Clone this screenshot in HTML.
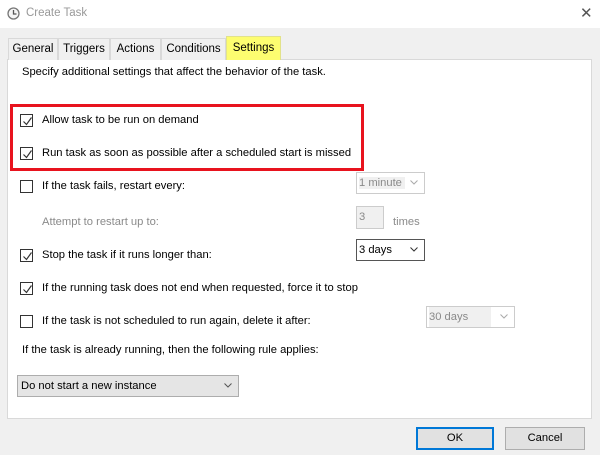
<!DOCTYPE html><html><head><style>
*{margin:0;padding:0;box-sizing:border-box}
body{width:600px;height:455px;background:#f0f0f0;position:relative;overflow:hidden;font-family:"Liberation Sans",sans-serif;font-size:11.2px;color:#000}
.a{position:absolute;white-space:nowrap}
.cb{position:absolute;width:13px;height:13px;border:1px solid #333;background:#fff}
.cb svg{position:absolute;left:1px;top:1px}
.tab{position:absolute;top:38px;height:22px;border:1px solid #d9d9d9;border-bottom:none;background:#f0f0f0;text-align:center;line-height:21px;font-size:11.5px}
.g{color:#8a8a8a}
.dd{position:absolute;border:1px solid #ccc;background:#fff;line-height:20px;padding-left:2px}
.ch{position:absolute;right:6px;top:7px}
</style></head><body>
<div class="a" style="left:0;top:0;width:600px;height:28px;background:#fff"></div>
<svg class="a" style="left:7px;top:7px" width="13" height="13" viewBox="0 0 13 13"><circle cx="6.5" cy="6.5" r="5.5" fill="#f5f5f5" stroke="#777" stroke-width="1.3"/><path d="M6.5 3v4h3" stroke="#555" fill="none" stroke-width="1.3"/></svg>
<div class="a" style="left:26px;top:7px;font-size:11.5px;color:#999">Create Task</div>
<div class="a" style="left:580px;top:4px;font-size:15px;color:#555">✕</div>
<div class="a" style="left:7px;top:59px;width:585px;height:360px;background:#fff;border:1px solid #d9d9d9"></div>
<div class="tab" style="left:8px;width:50px">General</div>
<div class="tab" style="left:58px;width:52px">Triggers</div>
<div class="tab" style="left:110px;width:51px">Actions</div>
<div class="tab" style="left:161px;width:65px">Conditions</div>
<div class="tab" style="left:226px;top:36px;height:24px;width:55px;background:#fdfd70;border-color:#e2e28a;line-height:22px">Settings</div>
<div class="a" style="left:22px;top:66px">Specify additional settings that affect the behavior of the task.</div>
<div class="a" style="left:10px;top:104px;width:354px;height:67px;border:3px solid #e8131e"></div>
<div class="cb" style="left:20px;top:114px"><svg width="11" height="11"><path d="M1.5 5.5l3 3 5-7" stroke="#333" fill="none" stroke-width="1.2"/></svg></div>
<div class="a" style="left:42px;top:114px">Allow task to be run on demand</div>
<div class="cb" style="left:20px;top:147px"><svg width="11" height="11"><path d="M1.5 5.5l3 3 5-7" stroke="#333" fill="none" stroke-width="1.2"/></svg></div>
<div class="a" style="left:42px;top:147px">Run task as soon as possible after a scheduled start is missed</div>
<div class="cb" style="left:20px;top:180px"></div>
<div class="a" style="left:42px;top:180px">If the task fails, restart every:</div>
<div class="dd g" style="left:356px;top:172px;width:69px;height:22px"><span style="background:#f0f0f0;padding-right:3px">1 minute</span><svg class="ch" width="8" height="5"><path d="M0.5 0.5l3.5 3.5 3.5-3.5" stroke="#aaa" fill="none"/></svg></div>
<div class="a g" style="left:42px;top:216px">Attempt to restart up to:</div>
<div class="dd g" style="left:356px;top:206px;width:28px;height:23px;background:#f0f0f0">3</div>
<div class="a g" style="left:393px;top:216px">times</div>
<div class="cb" style="left:20px;top:249px"><svg width="11" height="11"><path d="M1.5 5.5l3 3 5-7" stroke="#333" fill="none" stroke-width="1.2"/></svg></div>
<div class="a" style="left:42px;top:249px">Stop the task if it runs longer than:</div>
<div class="dd" style="left:356px;top:239px;width:69px;height:22px;border-color:#555">3 days<svg class="ch" width="8" height="5"><path d="M0.5 0.5l3.5 3.5 3.5-3.5" stroke="#333" fill="none"/></svg></div>
<div class="cb" style="left:20px;top:282px"><svg width="11" height="11"><path d="M1.5 5.5l3 3 5-7" stroke="#333" fill="none" stroke-width="1.2"/></svg></div>
<div class="a" style="left:42px;top:282px">If the running task does not end when requested, force it to stop</div>
<div class="cb" style="left:20px;top:315px"></div>
<div class="a" style="left:42px;top:315px">If the task is not scheduled to run again, delete it after:</div>
<div class="dd g" style="left:426px;top:306px;width:89px;height:22px"><span style="background:#f0f0f0;display:inline-block;width:62px">30 days</span><svg class="ch" width="8" height="5"><path d="M0.5 0.5l3.5 3.5 3.5-3.5" stroke="#aaa" fill="none"/></svg></div>
<div class="a" style="left:22px;top:344px">If the task is already running, then the following rule applies:</div>
<div class="dd" style="left:17px;top:375px;width:222px;height:22px;background:#e5e5e5;border-color:#adadad;padding-left:3px">Do not start a new instance<svg class="ch" width="8" height="5"><path d="M0.5 0.5l3.5 3.5 3.5-3.5" stroke="#555" fill="none"/></svg></div>
<div class="a" style="left:416px;top:427px;width:78px;height:23px;border:2px solid #0078d7;background:#e1e1e1;text-align:center;line-height:19px">OK</div>
<div class="a" style="left:505px;top:427px;width:80px;height:23px;border:1px solid #adadad;background:#e1e1e1;text-align:center;line-height:21px">Cancel</div>
</body></html>
